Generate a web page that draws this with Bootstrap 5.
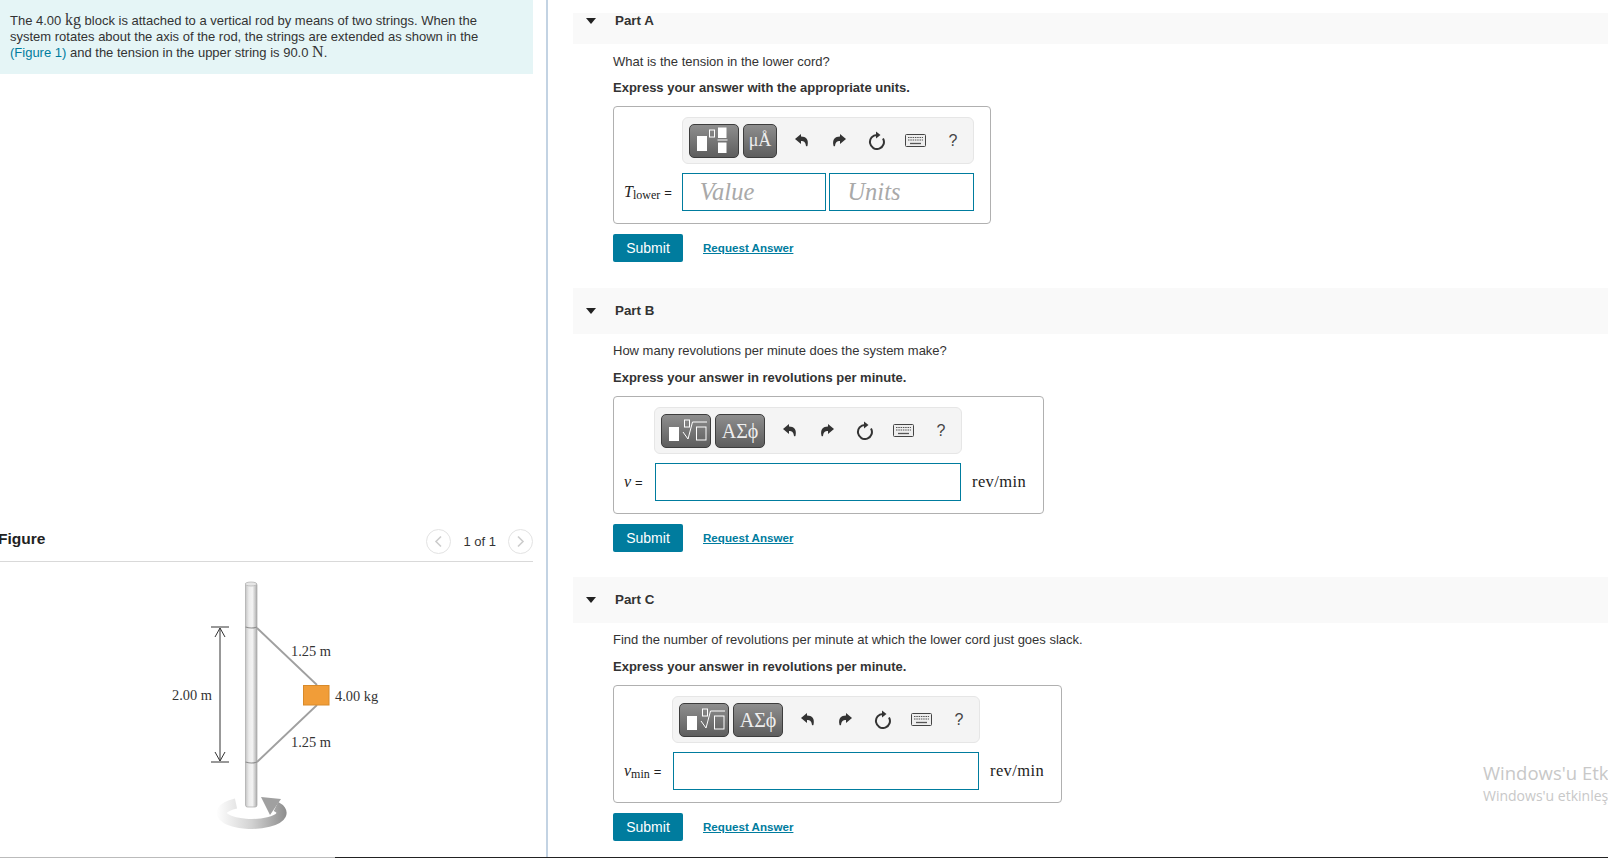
<!DOCTYPE html>
<html lang="en">
<head>
<meta charset="utf-8">
<title>Part A</title>
<link href="https://cdn.jsdelivr.net/npm/bootstrap@5.3.0/dist/css/bootstrap.min.css" rel="stylesheet">
<style>
html,body{height:100%;overflow:hidden}
body{font-family:"Liberation Sans",Arial,sans-serif;font-size:13px;color:#333;background:#fff}
.stage{height:858px;position:relative}
.leftcol{width:548px;height:857px;border-right:2px solid #c3d3e3;flex:none}
.intro{width:533px;height:74px;background:#e5f5f6;padding:12px 40px 0 10px;line-height:15.5px;font-size:13px;color:#333}
.intro a{color:#007c9e;text-decoration:none}
.mth{font-family:"Liberation Serif",serif;font-size:16px;line-height:1}
.figspace{height:455px}
.fighead{width:533px;height:33px;border-bottom:1px solid #d9d9d9;padding-bottom:7px}
.figtitle{font-weight:700;font-size:15.5px;color:#222;margin-left:-2px;margin-bottom:6px}
.pager{font-size:13px;gap:4px}
.pgbtn{width:25px;height:25px;border:1px solid #e3e3e3;border-radius:50%}
.figure-wrap{width:533px}
.rightcol{padding:13px 0 0 25px;min-width:0}
.parthead{height:31px;background:#f9f9f9;font-weight:700;font-size:13.33px;color:#333}
.parthead.firstpart{padding-bottom:15px}
.parthead.tall{height:46px}
.tri{width:0;height:0;border-left:5.500px solid transparent;border-right:5.500px solid transparent;border-top:6px solid #222;margin-left:13px;margin-right:19px}
.partbody{padding-left:40px}
.q{margin:9px 0 0;line-height:18px;height:18px}
.ex{margin:8px 0 0;font-weight:700;line-height:18px;height:18px}
.tall + .partbody .q{margin-top:8px}
.tall + .partbody .ex{margin-top:9px}
.ansbox{margin-top:9px;border:1px solid #b0b0b0;border-radius:4px;background:#fff;padding:10px 16px 12px 10px}
.w1{width:378px}.w2{width:431px}.w3{width:449px}
.tbar{height:47px;background:#f4f4f4;border:1px solid #e6e6e6;border-radius:6px;padding:0 1px 0 6px;gap:4px}
.tbar-b{margin-left:30px}
.tbar-c{margin-left:48px}
.tb1{width:50px;height:34px;background:linear-gradient(#8e8e8e,#5e5e5e);border:1px solid #3d3d3d;border-radius:5px}
.tb2{width:34px;height:34px;background:linear-gradient(#8e8e8e,#5e5e5e);border:1px solid #3d3d3d;border-radius:5px;color:#eee;font-family:"Liberation Serif",serif;font-size:18px}
.tb3{width:50px;font-size:20px}
.tool{width:38px;color:#333}
.helpq{font-size:16px;color:#444}
.toolgroup{margin-left:1px}
.eqrow{margin-top:9px;height:38px}
.lbl{font-family:"Liberation Serif",serif;font-size:14.5px;color:#222;white-space:nowrap}
.lbl i{font-size:16px}
.lbl sub{font-size:12px;bottom:-.2em}
.eq{font-family:"Liberation Sans",sans-serif;font-size:13px;margin-left:4px}
.lbl-b{width:31px;flex:none}
.lbl-c{width:49px;flex:none}
.field{height:38px;border:1px solid #007c9e;background:#fff;font-family:"Liberation Serif",serif;font-style:italic;font-size:24.5px;color:#a9a9a9;padding-left:17px;line-height:36px}
.fv{width:145px;margin-left:10px}
.fu{width:145px;margin-left:3px}
.fw{width:306px}
.unit{font-family:"Liberation Serif",serif;font-size:16.5px;letter-spacing:.4px;color:#222;margin-left:11px}
.actions{margin-top:10px;gap:20px}
.subbtn{width:70px;height:28px;background:#007c9e;border:0;border-radius:2px;color:#fff;font-size:14px;padding:0}
.reqlink{color:#007c9e;font-weight:700;font-size:11.6px;text-decoration:underline}
.partgap{height:26px}
.partgap-short{height:25px}
.winmark{position:absolute;left:1483px;top:764px;color:#c8c8c8;font-family:"Open Sans",sans-serif;white-space:nowrap;line-height:1}
.win1{font-size:18.5px}
.win2{font-size:14px;margin-top:6px}
.baseline{position:absolute;left:0;right:0;top:857px;height:1px;background:linear-gradient(90deg,#bbb 335px,#222 335px)}
</style>
</head>
<body>
<div class="stage d-flex">
  <div class="leftcol">
    <div class="intro">The 4.00 <span class="mth">kg</span> block is attached to a vertical rod by means of two strings. When the system rotates about the axis of the rod, the strings are extended as shown in the <a href="#">(Figure 1)</a> and the tension in the upper string is 90.0 <span class="mth">N</span>.</div>
    <div class="figspace"></div>
    <div class="fighead d-flex align-items-center justify-content-between">
      <span class="figtitle">Figure</span>
      <div class="pager d-flex align-items-center">
        <span class="pgbtn d-flex align-items-center justify-content-center"><svg width="9" height="13" viewBox="0 0 9 13"><path d="M7 1.500 2 6.500l5 5" fill="none" stroke="#ccc" stroke-width="1.600"/></svg></span>
        <span class="mx-2">1 of 1</span>
        <span class="pgbtn d-flex align-items-center justify-content-center"><svg width="9" height="13" viewBox="0 0 9 13"><path d="M2 1.500 7 6.500l-5 5" fill="none" stroke="#ccc" stroke-width="1.600"/></svg></span>
      </div>
    </div>
    <div class="figure-wrap">
      <svg width="533" height="295" viewBox="0 0 533 295" role="img" aria-label="Block on a rod">
        <defs>
          <linearGradient id="rod" x1="0" x2="1" y1="0" y2="0"><stop offset="0" stop-color="#c4c4c4"/><stop offset=".3" stop-color="#ececec"/><stop offset=".6" stop-color="#f3f3f3"/><stop offset="1" stop-color="#acacac"/></linearGradient>
          <linearGradient id="arr" gradientUnits="userSpaceOnUse" x1="216" x2="287" y1="0" y2="0"><stop offset="0" stop-color="#fff"/><stop offset=".5" stop-color="#d2d2d2"/><stop offset="1" stop-color="#8c8c8c"/></linearGradient>
        </defs>
        <path d="M236 241.500A30 11 0 1 0 276 244.500" fill="none" stroke="url(#arr)" stroke-width="10"/>
        <path d="M261 235 281 237 270 253z" fill="#a0a0a0"/>
        <rect x="245.500" y="21" width="11.500" height="224" rx="2" fill="url(#rod)" stroke="#a8a8a8" stroke-width=".7"/>
        <ellipse cx="251" cy="22" rx="5.800" ry="2" fill="#e6e6e6" stroke="#b0b0b0" stroke-width=".7"/>
        <path d="M245.500 65q6 2 11.500 0M245.500 200q6 2 11.500 0" fill="none" stroke="#8f8f8f" stroke-width="1.200"/>
        <path d="M257 66 317 123M257 200 317 143" fill="none" stroke="#a0a0a0" stroke-width="1.800"/>
        <path d="M211 65H229M211 200H229" stroke="#333" stroke-width="1"/>
        <path d="M220 66V199M215 75l5-9 5 9M215 190l5 9 5-9" fill="none" stroke="#333" stroke-width="1"/>
        <rect x="303.500" y="123.500" width="25.500" height="19.500" fill="#f19d38" stroke="#d88a2a"/>
        <g font-family="Liberation Serif,serif" font-size="14.400" fill="#333">
          <text x="291" y="94">1.25 m</text>
          <text x="291" y="185">1.25 m</text>
          <text x="172" y="138">2.00 m</text>
          <text x="335" y="139">4.00 kg</text>
        </g>
      </svg>
    </div>
  </div>
  <div class="rightcol flex-grow-1">
    <div class="parthead firstpart d-flex align-items-center"><span class="tri"></span>Part A</div>
    <div class="partbody">
      <p class="q">What is the tension in the lower cord?</p>
      <p class="ex">Express your answer with the appropriate units.</p>
      <div class="ansbox w1">
        <div class="d-flex justify-content-end">
          <div class="tbar d-flex align-items-center">
            <span class="tb1 d-flex"><svg width="48" height="32" viewBox="1 1 48 32"><rect x="8" y="12" width="10" height="15" fill="#fff"/><rect x="20.500" y="6" width="5" height="7" fill="none" stroke="#fff"/><rect x="29" y="3.500" width="8.500" height="10.500" fill="#fff"/><rect x="28.500" y="15.500" width="10" height="1" fill="#fff"/><rect x="29" y="18.500" width="8.500" height="10.500" fill="#fff"/></svg></span>
            <span class="tb2 d-flex align-items-center justify-content-center">μÅ</span>
            <div class="toolgroup d-flex align-items-center">
              <span class="tool d-flex justify-content-center"><svg width="15" height="15" viewBox="0 0 15 15"><path d="M7 1 1 6l6 5V8c3 0 4.500 1 5 5 .8.500 1.200.200 1.500-.300C15 6.500 12 3.500 7 3.500z" fill="#333"/></svg></span>
              <span class="tool d-flex justify-content-center"><svg width="15" height="15" viewBox="0 0 15 15"><path d="M8 1l6 5-6 5V8c-3 0-4.500 1-5 5-.8.500-1.200.200-1.500-.300C0 6.500 3 3.500 8 3.500z" fill="#333"/></svg></span>
              <span class="tool d-flex justify-content-center"><svg width="18" height="19" viewBox="0 0 18 19"><path d="M9 4a7 7 0 1 0 6 3.500" fill="none" stroke="#333" stroke-width="2"/><path d="M8 .5l4.500 3.500L8 7.500z" fill="#333"/></svg></span>
              <span class="tool d-flex justify-content-center"><svg width="21" height="13" viewBox="0 0 21 13"><rect x=".5" y=".5" width="20" height="12" rx="1" fill="#eee" stroke="#444"/><path d="M3 3.500h15M3 6h15" stroke="#555" stroke-dasharray="1.500 .8"/><path d="M5 9.500h11" stroke="#555" stroke-width="1.300"/></svg></span>
              <span class="tool helpq text-center">?</span>
            </div>
          </div>
        </div>
        <div class="eqrow d-flex align-items-center justify-content-end">
          <span class="lbl"><i>T</i><sub>lower</sub><span class="eq">=</span></span>
          <span class="field fv">Value</span>
          <span class="field fu">Units</span>
        </div>
      </div>
      <div class="actions d-flex align-items-center">
        <button type="button" class="btn subbtn">Submit</button>
        <a class="reqlink" href="#">Request Answer</a>
      </div>
    </div>
    <div class="partgap"></div>
    <div class="parthead tall d-flex align-items-center"><span class="tri"></span>Part B</div>
    <div class="partbody">
      <p class="q">How many revolutions per minute does the system make?</p>
      <p class="ex">Express your answer in revolutions per minute.</p>
      <div class="ansbox w2">
        <div class="d-flex">
          <div class="tbar tbar-b d-flex align-items-center">
            <span class="tb1 d-flex"><svg width="48" height="32" viewBox="1 1 48 32"><rect x="8" y="13" width="10" height="14" fill="#fff"/><rect x="23.500" y="6" width="5" height="7" fill="none" stroke="#fff"/><path d="M22 18l5 7 4.500-17H46" fill="none" stroke="#fff"/><rect x="35.500" y="13" width="9.500" height="13" fill="none" stroke="#fff"/></svg></span>
            <span class="tb2 tb3 d-flex align-items-center justify-content-center">ΑΣϕ</span>
            <div class="toolgroup d-flex align-items-center">
              <span class="tool d-flex justify-content-center"><svg width="15" height="15" viewBox="0 0 15 15"><path d="M7 1 1 6l6 5V8c3 0 4.500 1 5 5 .8.500 1.200.200 1.500-.300C15 6.500 12 3.500 7 3.500z" fill="#333"/></svg></span>
              <span class="tool d-flex justify-content-center"><svg width="15" height="15" viewBox="0 0 15 15"><path d="M8 1l6 5-6 5V8c-3 0-4.500 1-5 5-.8.500-1.200.200-1.500-.300C0 6.500 3 3.500 8 3.500z" fill="#333"/></svg></span>
              <span class="tool d-flex justify-content-center"><svg width="18" height="19" viewBox="0 0 18 19"><path d="M9 4a7 7 0 1 0 6 3.500" fill="none" stroke="#333" stroke-width="2"/><path d="M8 .5l4.500 3.500L8 7.500z" fill="#333"/></svg></span>
              <span class="tool d-flex justify-content-center"><svg width="21" height="13" viewBox="0 0 21 13"><rect x=".5" y=".5" width="20" height="12" rx="1" fill="#eee" stroke="#444"/><path d="M3 3.500h15M3 6h15" stroke="#555" stroke-dasharray="1.500 .8"/><path d="M5 9.500h11" stroke="#555" stroke-width="1.300"/></svg></span>
              <span class="tool helpq text-center">?</span>
            </div>
          </div>
        </div>
        <div class="eqrow d-flex align-items-center">
          <span class="lbl lbl-b"><i>ν</i><span class="eq">=</span></span>
          <span class="field fw"></span>
          <span class="unit">rev/min</span>
        </div>
      </div>
      <div class="actions d-flex align-items-center">
        <button type="button" class="btn subbtn">Submit</button>
        <a class="reqlink" href="#">Request Answer</a>
      </div>
    </div>
    <div class="partgap-short"></div>
    <div class="parthead tall d-flex align-items-center"><span class="tri"></span>Part C</div>
    <div class="partbody">
      <p class="q">Find the number of revolutions per minute at which the lower cord just goes slack.</p>
      <p class="ex">Express your answer in revolutions per minute.</p>
      <div class="ansbox w3">
        <div class="d-flex">
          <div class="tbar tbar-c d-flex align-items-center">
            <span class="tb1 d-flex"><svg width="48" height="32" viewBox="1 1 48 32"><rect x="8" y="13" width="10" height="14" fill="#fff"/><rect x="23.500" y="6" width="5" height="7" fill="none" stroke="#fff"/><path d="M22 18l5 7 4.500-17H46" fill="none" stroke="#fff"/><rect x="35.500" y="13" width="9.500" height="13" fill="none" stroke="#fff"/></svg></span>
            <span class="tb2 tb3 d-flex align-items-center justify-content-center">ΑΣϕ</span>
            <div class="toolgroup d-flex align-items-center">
              <span class="tool d-flex justify-content-center"><svg width="15" height="15" viewBox="0 0 15 15"><path d="M7 1 1 6l6 5V8c3 0 4.500 1 5 5 .8.500 1.200.200 1.500-.300C15 6.500 12 3.500 7 3.500z" fill="#333"/></svg></span>
              <span class="tool d-flex justify-content-center"><svg width="15" height="15" viewBox="0 0 15 15"><path d="M8 1l6 5-6 5V8c-3 0-4.500 1-5 5-.8.500-1.200.200-1.500-.300C0 6.500 3 3.500 8 3.500z" fill="#333"/></svg></span>
              <span class="tool d-flex justify-content-center"><svg width="18" height="19" viewBox="0 0 18 19"><path d="M9 4a7 7 0 1 0 6 3.500" fill="none" stroke="#333" stroke-width="2"/><path d="M8 .5l4.500 3.500L8 7.500z" fill="#333"/></svg></span>
              <span class="tool d-flex justify-content-center"><svg width="21" height="13" viewBox="0 0 21 13"><rect x=".5" y=".5" width="20" height="12" rx="1" fill="#eee" stroke="#444"/><path d="M3 3.500h15M3 6h15" stroke="#555" stroke-dasharray="1.500 .8"/><path d="M5 9.500h11" stroke="#555" stroke-width="1.300"/></svg></span>
              <span class="tool helpq text-center">?</span>
            </div>
          </div>
        </div>
        <div class="eqrow d-flex align-items-center">
          <span class="lbl lbl-c"><i>ν</i><sub>min</sub><span class="eq">=</span></span>
          <span class="field fw"></span>
          <span class="unit">rev/min</span>
        </div>
      </div>
      <div class="actions d-flex align-items-center">
        <button type="button" class="btn subbtn">Submit</button>
        <a class="reqlink" href="#">Request Answer</a>
      </div>
    </div>
  </div>
  <div class="winmark"><div class="win1">Windows'u Etk</div><div class="win2">Windows'u etkinleş</div></div>
  <div class="baseline"></div>
</div>
<script src="https://cdn.jsdelivr.net/npm/bootstrap@5.3.0/dist/js/bootstrap.bundle.min.js"></script>
</body>
</html>
